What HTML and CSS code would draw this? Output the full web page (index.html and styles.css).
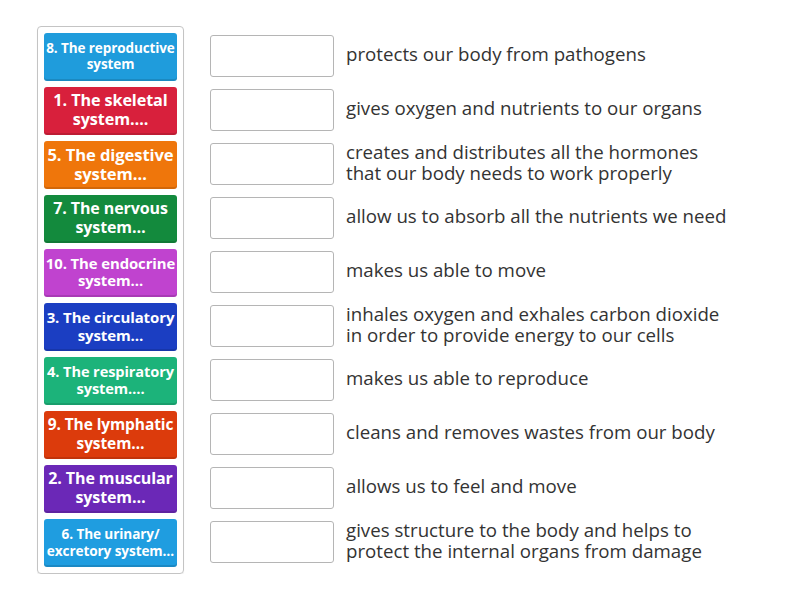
FILE: index.html
```html
<!DOCTYPE html>
<html>
<head>
<meta charset="utf-8">
<link rel="stylesheet" href="styles.css">
</head>
<body>
<div class="page">
  <div class="bank">
    <div class="tile c-blue s13">8. The reproductive system</div>
    <div class="tile c-red s162">1. The skeletal system….</div>
    <div class="tile c-orange s166">5. The digestive system…</div>
    <div class="tile c-green s16">7. The nervous system…</div>
    <div class="tile c-pink s149">10. The endocrine system…</div>
    <div class="tile c-navy s15">3. The circulatory system…</div>
    <div class="tile c-teal s146">4. The respiratory system….</div>
    <div class="tile c-rust s155">9. The lymphatic system…</div>
    <div class="tile c-purple s16">2. The muscular system…</div>
    <div class="tile c-sky s136">6. The urinary/ excretory system…</div>
  </div>
  <div class="rows">
    <div class="row"><div class="slot"></div><div class="desc">protects our body from pathogens</div></div>
    <div class="row"><div class="slot"></div><div class="desc">gives oxygen and nutrients to our organs</div></div>
    <div class="row"><div class="slot"></div><div class="desc">creates and distributes all the hormones<br>that our body needs to work properly</div></div>
    <div class="row"><div class="slot"></div><div class="desc">allow us to absorb all the nutrients we need</div></div>
    <div class="row"><div class="slot"></div><div class="desc">makes us able to move</div></div>
    <div class="row"><div class="slot"></div><div class="desc">inhales oxygen and exhales carbon dioxide<br>in order to provide energy to our cells</div></div>
    <div class="row"><div class="slot"></div><div class="desc">makes us able to reproduce</div></div>
    <div class="row"><div class="slot"></div><div class="desc">cleans and removes wastes from our body</div></div>
    <div class="row"><div class="slot"></div><div class="desc">allows us to feel and move</div></div>
    <div class="row"><div class="slot"></div><div class="desc">gives structure to the body and helps to<br>protect the internal organs from damage</div></div>
  </div>
</div>
</body>
</html>
```
FILE: styles.css
```css
html, body {
  margin: 0;
  padding: 0;
  background: #ffffff;
}
body {
  font-family: "Open Sans", "Liberation Sans", sans-serif;
}
.page {
  display: flex;
  align-items: flex-start;
  padding: 26px 0 0 37px;
}
.bank {
  width: 133px;
  padding: 6px;
  border: 1px solid #c4c4c4;
  border-radius: 4px;
  display: flex;
  flex-direction: column;
  gap: 6px;
  box-shadow: 0 1px 1px rgba(0,0,0,0.08);
}
.tile {
  height: 48px;
  border-radius: 3px;
  color: #ffffff;
  font-weight: 700;
  text-align: center;
  display: flex;
  align-items: center;
  justify-content: center;
  padding: 0 1px 3px;
  box-sizing: border-box;
  line-height: 1.2;
  box-shadow: inset 0 -2px 0 rgba(0,0,0,0.12);
  letter-spacing: -0.1px;
}
.s13 { font-size: 13.5px; line-height: 16px; }
.s136 { font-size: 13.6px; line-height: 17px; }
.s146 { font-size: 14.6px; line-height: 17px; }
.s149 { font-size: 14.9px; line-height: 17px; }
.s15 { font-size: 15px; line-height: 18px; }
.s155 { font-size: 15.5px; line-height: 19px; }
.s16 { font-size: 16px; line-height: 19px; }
.s162 { font-size: 16.2px; line-height: 19px; }
.s166 { font-size: 16.6px; line-height: 19px; }
.c-blue { background: #1f9cdc; }
.c-red { background: #d8203c; }
.c-orange { background: #ef760b; }
.c-green { background: #138a3d; }
.c-pink { background: #c043cf; }
.c-navy { background: #1b3ec2; }
.c-teal { background: #1cb37a; }
.c-rust { background: #dc3b0c; }
.c-purple { background: #6b28b7; }
.c-sky { background: #1f9de0; }
.rows {
  margin-left: 26px;
  padding-top: 9px;
  display: flex;
  flex-direction: column;
  gap: 12px;
}
.row {
  display: flex;
  align-items: center;
  height: 42px;
}
.slot {
  width: 124px;
  height: 42px;
  box-sizing: border-box;
  border: 1px solid #b5b5b5;
  border-radius: 3px;
  flex-shrink: 0;
}
.desc {
  margin-left: 12px;
  font-size: 18.7px;
  line-height: 21.5px;
  color: #333333;
  white-space: nowrap;
  margin-top: -4px;
}
```
